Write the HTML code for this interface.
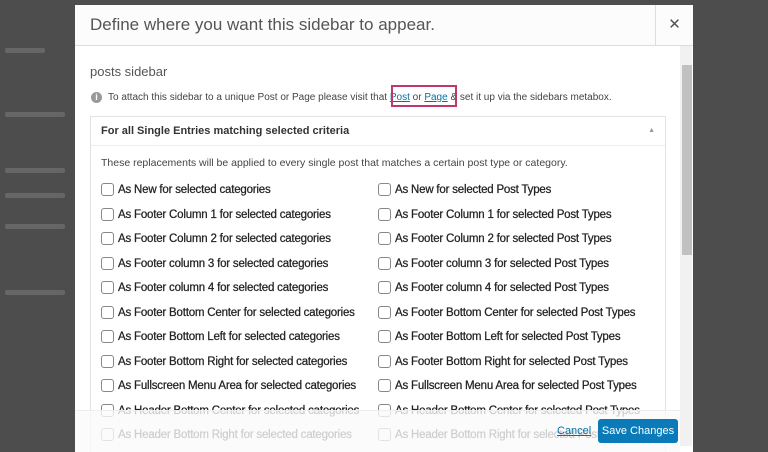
<!DOCTYPE html>
<html><head><style>
body{margin:0;width:768px;height:452px;overflow:hidden;background:#4d4d4d;font-family:"Liberation Sans",sans-serif;position:relative}
.bg{position:absolute;background:#666;height:5px;border-radius:2px}
.modal{position:absolute;left:75px;top:5px;width:618px;height:447px;background:#fff;overflow:hidden}
.hd{height:40px;border-bottom:1px solid #ddd;background:#fcfcfc;position:relative}
.hd h1{margin:0;position:absolute;left:15px;top:10px;font-weight:normal;font-size:17px;color:#555}
.x{position:absolute;right:0;top:0;width:37px;height:40px;border-left:1px solid #ddd;text-align:center;line-height:40px;font-size:15px;color:#555}
.sb{position:absolute;left:605px;top:41px;width:12px;height:400px;background:#f1f1f1}
.th{position:absolute;left:607px;top:60px;width:10px;height:190px;background:#c1c1c1}
.t{position:absolute;font-size:11px;color:#444;white-space:nowrap}
.box{position:absolute;left:15px;top:111px;width:574px;height:340px;border:1px solid #e2e2e2}
.bh{height:28px;border-bottom:1px solid #eee;font-size:11px;font-weight:bold;color:#333;line-height:28px;padding-left:10px}
.r{position:absolute;font-size:11.5px;color:#222;white-space:nowrap;letter-spacing:-0.2px;-webkit-text-stroke:0.25px #222}
.r i{position:absolute;left:-17px;top:-1px;width:11px;height:11px;border:1px solid #888;border-radius:3px;-webkit-text-stroke:0}
.ft{position:absolute;left:0;top:405px;width:605px;height:42px;background:rgba(250,250,250,.8);border-top:1px solid #eee}
.btn{position:absolute;left:523px;top:8px;width:80px;height:24px;background:#0a7bb8;color:#fff;font-size:11px;line-height:24px;text-align:center;border-radius:3px}
</style></head><body>
<div class="bg" style="left:5px;top:48px;width:40px"></div>
<div class="bg" style="left:5px;top:112px;width:60px"></div>
<div class="bg" style="left:5px;top:168px;width:60px"></div>
<div class="bg" style="left:5px;top:193px;width:60px"></div>
<div class="bg" style="left:5px;top:224px;width:60px"></div>
<div class="bg" style="left:5px;top:290px;width:60px"></div>
<div class="modal">
<div class="hd"><h1>Define where you want this sidebar to appear.</h1><div class="x">✕</div></div>
<div class="t" style="left:15px;top:59px;font-size:13px;color:#555">posts sidebar</div>
<div style="position:absolute;left:16px;top:87px;width:11px;height:11px;border-radius:50%;background:#999;color:#fff;font-size:9px;text-align:center;line-height:11px;font-weight:bold">i</div>
<div class="t" style="left:33px;top:87px;font-size:10px">To attach this sidebar to a unique Post or Page please visit that <span style="color:#0073aa;text-decoration:underline">Post</span> or <span style="color:#0073aa;text-decoration:underline">Page</span> &amp; set it up via the sidebars metabox.</div>
<div style="position:absolute;left:316px;top:80px;width:66px;height:22px;border:2px solid #c0386a;box-sizing:border-box"></div>
<div class="box"><div class="bh">For all Single Entries matching selected criteria<span style="position:absolute;right:10px;font-size:7px;color:#999">▲</span></div></div>
<div class="t" style="left:26px;top:152px;font-size:10.5px">These replacements will be applied to every single post that matches a certain post type or category.</div>
<div class="r" style="left:43px;top:179px"><i></i>As New for selected categories</div><div class="r" style="left:320px;top:179px"><i></i>As New for selected Post Types</div>
<div class="r" style="left:43px;top:204px"><i></i>As Footer Column 1 for selected categories</div><div class="r" style="left:320px;top:204px"><i></i>As Footer Column 1 for selected Post Types</div>
<div class="r" style="left:43px;top:228px"><i></i>As Footer Column 2 for selected categories</div><div class="r" style="left:320px;top:228px"><i></i>As Footer Column 2 for selected Post Types</div>
<div class="r" style="left:43px;top:253px"><i></i>As Footer column 3 for selected categories</div><div class="r" style="left:320px;top:253px"><i></i>As Footer column 3 for selected Post Types</div>
<div class="r" style="left:43px;top:277px"><i></i>As Footer column 4 for selected categories</div><div class="r" style="left:320px;top:277px"><i></i>As Footer column 4 for selected Post Types</div>
<div class="r" style="left:43px;top:302px"><i></i>As Footer Bottom Center for selected categories</div><div class="r" style="left:320px;top:302px"><i></i>As Footer Bottom Center for selected Post Types</div>
<div class="r" style="left:43px;top:326px"><i></i>As Footer Bottom Left for selected categories</div><div class="r" style="left:320px;top:326px"><i></i>As Footer Bottom Left for selected Post Types</div>
<div class="r" style="left:43px;top:351px"><i></i>As Footer Bottom Right for selected categories</div><div class="r" style="left:320px;top:351px"><i></i>As Footer Bottom Right for selected Post Types</div>
<div class="r" style="left:43px;top:375px"><i></i>As Fullscreen Menu Area for selected categories</div><div class="r" style="left:320px;top:375px"><i></i>As Fullscreen Menu Area for selected Post Types</div>
<div class="r" style="left:43px;top:400px"><i></i>As Header Bottom Center for selected categories</div><div class="r" style="left:320px;top:400px"><i></i>As Header Bottom Center for selected Post Types</div>
<div class="r" style="left:43px;top:424px"><i></i>As Header Bottom Right for selected categories</div><div class="r" style="left:320px;top:424px"><i></i>As Header Bottom Right for selected Post Types</div>
<div class="ft"><span style="position:absolute;left:482px;top:14px;font-size:11px;color:#0073aa;text-decoration:underline">Cancel</span><div class="btn">Save Changes</div></div>
<div class="sb"></div><div class="th"></div>
</div>
</body></html>
